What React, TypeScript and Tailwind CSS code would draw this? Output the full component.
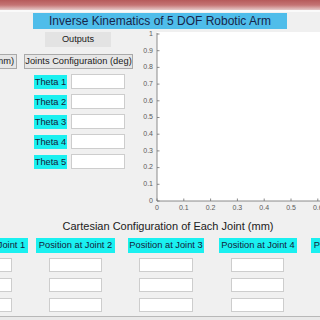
const yTicks = [0, 0.1, 0.2, 0.3, 0.4, 0.5, 0.6, 0.7, 0.8, 0.9, 1];
const xTicks = [0, 0.1, 0.2, 0.3, 0.4, 0.5, 0.6];

const AxesPlot = () => {
  const x0 = 17;
  const y0 = 172;
  return (
    <svg width={180} height={186} className="block shrink-0">
      <rect x={x0} y={3} width={163} height={y0 - 3} fill="#ffffff" />
      <line x1={x0} y1={4} x2={x0} y2={y0} stroke="#6e6e6e" strokeWidth={0.8} />
      <line x1={x0} y1={y0} x2={180} y2={y0} stroke="#6e6e6e" strokeWidth={0.8} />
      {yTicks.map((v) => {
        const y = y0 - v * 167;
        return (
          <g key={"y" + v}>
            <line x1={x0} y1={y} x2={x0 + 2.5} y2={y} stroke="#6e6e6e" strokeWidth={0.8} />
            <text
              x={13}
              y={y}
              textAnchor="end"
              dominantBaseline="middle"
              fontSize={7}
              fill="#5a5a5a"
              fontFamily="Liberation Sans, Arial, sans-serif"
            >
              {v}
            </text>
          </g>
        );
      })}
      {xTicks.map((v) => {
        const x = x0 + v * 268;
        return (
          <g key={"x" + v}>
            <line x1={x} y1={y0} x2={x} y2={y0 - 2.5} stroke="#6e6e6e" strokeWidth={0.8} />
            <text
              x={x}
              y={179}
              textAnchor="middle"
              dominantBaseline="middle"
              fontSize={7}
              fill="#5a5a5a"
              fontFamily="Liberation Sans, Arial, sans-serif"
            >
              {v}
            </text>
          </g>
        );
      })}
    </svg>
  );
};

const Field = ({ className = "" }: { className?: string }) => (
  <div className={`h-[14px] bg-white border border-[#cdcdcd] shrink-0 ${className}`} />
);

const ThetaRow = ({ n }: { n: number }) => (
  <div className="flex items-center h-[15px]">
    <div className="ml-[34px] w-[33px] h-[14px] bg-[#1af0f0] text-[9.3px] leading-[14px] text-center text-[#14203a] whitespace-nowrap">
      Theta {n}
    </div>
    <Field className="ml-[4px] w-[54px] h-[15px]" />
  </div>
);

const posLabels = [
  { text: "Position at Joint 1", cls: "ml-[-51px] w-[79px]" },
  { text: "Position at Joint 2", cls: "ml-[8px] w-[79px]" },
  { text: "Position at Joint 3", cls: "ml-[13px] w-[76px]" },
  { text: "Position at Joint 4", cls: "ml-[15px] w-[78px]" },
  { text: "Position at Joint 5", cls: "ml-[14px] w-[79px]" },
];

const FieldRow = () => (
  <div className="flex h-[13px]">
    <Field className="ml-[-42px] w-[54px] h-[13px]" />
    <Field className="ml-[37px] w-[53px] h-[13px]" />
    <Field className="ml-[37px] w-[54px] h-[13px]" />
    <Field className="ml-[38px] w-[53px] h-[13px]" />
  </div>
);

export default function App() {
  return (
    <div
      className="w-[320px] h-[320px] overflow-hidden bg-[#f0f0f0] flex flex-col"
      style={{ fontFamily: '"Liberation Sans", Arial, sans-serif' }}
    >
      <div className="h-[10px] shrink-0 bg-gradient-to-b from-[#b65a5a] via-[#c47474] to-[#e4caca]" />
      <div className="h-[2px] shrink-0 bg-[#fafafa]" />

      <div className="h-[17px] shrink-0 pt-[1px]">
        <div className="ml-[33px] w-[254px] h-[16px] bg-[#4fbdea] text-[12px] leading-[16px] text-center text-[#18264a] whitespace-nowrap">
          Inverse Kinematics of 5 DOF Robotic Arm
        </div>
      </div>

      <div className="flex h-[186px] shrink-0">
        <div className="w-[140px] shrink-0 flex flex-col">
          <div className="mt-[3px] ml-[45px] w-[66px] h-[15px] bg-[#e3e3e3] text-[9.2px] leading-[15px] text-center text-[#1a1a1a]">
            Outputs
          </div>
          <div className="mt-[7px] flex h-[15px]">
            <div className="ml-[-20px] w-[37px] h-[15px] bg-[#e6e6e6] border border-[#a9a9a9] text-[9.3px] leading-[13px] text-right pr-[2px] text-[#1a1a1a] whitespace-nowrap">
              mm)
            </div>
            <div className="ml-[7px] w-[109px] h-[15px] bg-[#e6e6e6] border border-[#a9a9a9] text-[9.3px] leading-[13px] text-center text-[#1a1a1a] whitespace-nowrap">
              Joints Configuration (deg)
            </div>
          </div>
          <div className="mt-[5px] flex flex-col gap-[5px]">
            {[1, 2, 3, 4, 5].map((n) => (
              <ThetaRow key={n} n={n} />
            ))}
          </div>
        </div>
        <AxesPlot />
      </div>

      <div className="mt-[4px] h-[14px] shrink-0 pl-[16px] text-center text-[11px] leading-[14px] text-[#202020] whitespace-nowrap">
        Cartesian Configuration of Each Joint (mm)
      </div>

      <div className="mt-[5px] flex h-[15px] shrink-0">
        {posLabels.map((l) => (
          <div
            key={l.text}
            className={`${l.cls} shrink-0 h-[15px] bg-[#1af0f0] text-[9.3px] leading-[15px] text-center text-[#14203a] whitespace-nowrap overflow-hidden`}
          >
            {l.text}
          </div>
        ))}
      </div>

      <div className="mt-[5px] flex flex-col gap-[7px] shrink-0">
        <FieldRow />
        <FieldRow />
        <FieldRow />
      </div>

      <div className="mt-[5px] h-[1px] shrink-0 bg-[#b8b8b8]" />
      <div className="flex-1 bg-[#e9e9e9]" />
    </div>
  );
}
